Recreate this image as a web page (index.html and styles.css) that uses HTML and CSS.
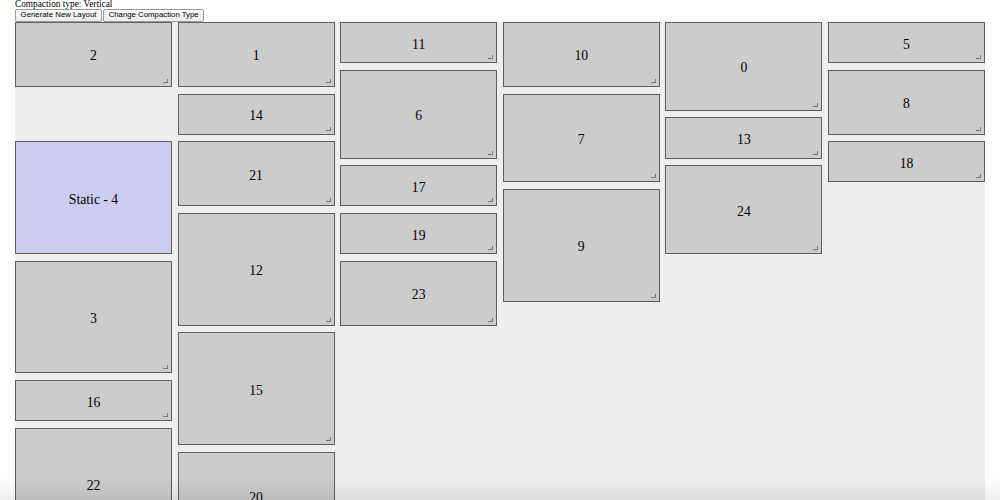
FILE: index.html
```html
<!DOCTYPE html>
<html>
<head>
<meta charset="utf-8">
<link rel="stylesheet" href="styles.css">
</head>
<body>
<div class="title">Compaction type: Vertical</div>
<div class="controls">
  <button class="btn">Generate New Layout</button>
  <button class="btn">Change Compaction Type</button>
</div>
<div class="layout">
  <div class="item" style="grid-area: 1 / 1 / span 3"><span class="text">2</span></div>
  <div class="item static" style="grid-area: 6 / 1 / span 5"><span class="text">Static - 4</span></div>
  <div class="item" style="grid-area: 11 / 1 / span 5"><span class="text">3</span></div>
  <div class="item" style="grid-area: 16 / 1 / span 2"><span class="text">16</span></div>
  <div class="item" style="grid-area: 18 / 1 / span 5"><span class="text">22</span></div>

  <div class="item" style="grid-area: 1 / 2 / span 3"><span class="text">1</span></div>
  <div class="item" style="grid-area: 4 / 2 / span 2"><span class="text">14</span></div>
  <div class="item" style="grid-area: 6 / 2 / span 3"><span class="text">21</span></div>
  <div class="item" style="grid-area: 9 / 2 / span 5"><span class="text">12</span></div>
  <div class="item" style="grid-area: 14 / 2 / span 5"><span class="text">15</span></div>
  <div class="item" style="grid-area: 19 / 2 / span 4"><span class="text">20</span></div>

  <div class="item" style="grid-area: 1 / 3 / span 2"><span class="text">11</span></div>
  <div class="item" style="grid-area: 3 / 3 / span 4"><span class="text">6</span></div>
  <div class="item" style="grid-area: 7 / 3 / span 2"><span class="text">17</span></div>
  <div class="item" style="grid-area: 9 / 3 / span 2"><span class="text">19</span></div>
  <div class="item" style="grid-area: 11 / 3 / span 3"><span class="text">23</span></div>

  <div class="item" style="grid-area: 1 / 4 / span 3"><span class="text">10</span></div>
  <div class="item" style="grid-area: 4 / 4 / span 4"><span class="text">7</span></div>
  <div class="item" style="grid-area: 8 / 4 / span 5"><span class="text">9</span></div>

  <div class="item" style="grid-area: 1 / 5 / span 4"><span class="text">0</span></div>
  <div class="item" style="grid-area: 5 / 5 / span 2"><span class="text">13</span></div>
  <div class="item" style="grid-area: 7 / 5 / span 4"><span class="text">24</span></div>

  <div class="item" style="grid-area: 1 / 6 / span 2"><span class="text">5</span></div>
  <div class="item" style="grid-area: 3 / 6 / span 3"><span class="text">8</span></div>
  <div class="item" style="grid-area: 6 / 6 / span 2"><span class="text">18</span></div>
</div>
<div class="fade"></div>
</body>
</html>
```
FILE: styles.css
```css
html, body {
  margin: 0;
  padding: 0;
  background: #fff;
  overflow: hidden;
}

.title {
  font-family: "Liberation Serif", serif;
  font-size: 9.3px;
  line-height: 10px;
  height: 10px;
  margin-top: -1px;
  padding-left: 15px;
  color: #000;
}

.controls {
  display: flex;
  gap: 1px;
  padding-left: 15px;
  height: 12.6px;
}

.btn {
  font-family: "Liberation Sans", Arial, sans-serif;
  font-size: 7.8px;
  line-height: 10px;
  height: 12.6px;
  padding: 0 4.6px;
  margin: 0;
  color: #000;
  background: linear-gradient(#fbfbfb, #ececec);
  border: 1px solid #9a9a9a;
  border-radius: 2px;
}

.layout {
  margin-top: 0.4px;
  margin-left: 15px;
  width: 970px;
  display: grid;
  grid-template-columns: repeat(6, 1fr);
  grid-template-rows: repeat(22, 17.2px);
  column-gap: 5.6px;
  row-gap: 6.7px;
  background: #eee;
}

.item {
  position: relative;
  box-sizing: border-box;
  background: #ccc;
  border: 1px solid #5e5e5e;
  display: flex;
  align-items: center;
  justify-content: center;
  padding-top: 4px;
}

.item::after {
  content: "";
  position: absolute;
  right: 3px;
  bottom: 3px;
  width: 4px;
  height: 3px;
  border-right: 1px solid #777;
  border-bottom: 1px solid #777;
}

.item.static {
  background: #cce;
}

.item.static::after {
  display: none;
}

.text {
  font-family: "Liberation Serif", serif;
  font-size: 13.7px;
  line-height: 14px;
  color: #000;
}

.fade {
  position: fixed;
  left: 0;
  right: 0;
  bottom: 0;
  height: 22px;
  background: linear-gradient(rgba(0,0,0,0), rgba(0,0,0,0.07));
  pointer-events: none;
}
```
